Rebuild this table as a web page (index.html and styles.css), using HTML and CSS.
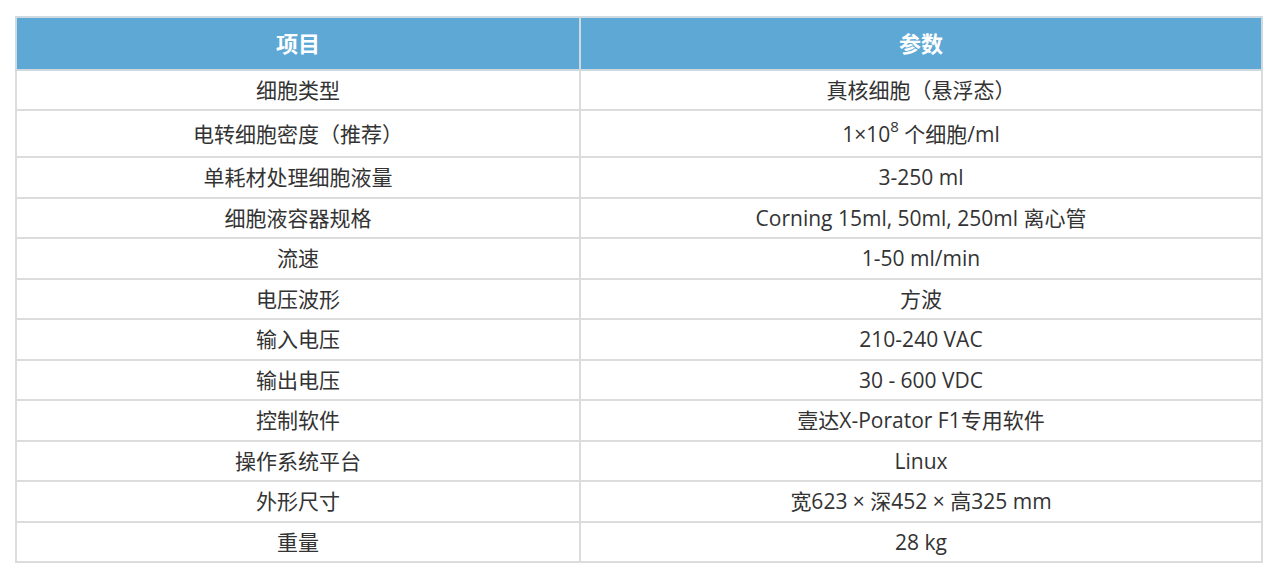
FILE: index.html
```html
<!DOCTYPE html>
<html lang="zh-CN">
<head>
<meta charset="utf-8">
<link rel="stylesheet" href="styles.css">
</head>
<body>
<table class="spec">
  <colgroup><col class="c1"><col class="c2"></colgroup>
  <thead>
    <tr><th>项目</th><th>参数</th></tr>
  </thead>
  <tbody>
    <tr><td>细胞类型</td><td>真核细胞（悬浮态）</td></tr>
    <tr class="tall"><td>电转细胞密度（推荐）</td><td>1×10<sup>8</sup> 个细胞/ml</td></tr>
    <tr><td>单耗材处理细胞液量</td><td>3-250 ml</td></tr>
    <tr><td>细胞液容器规格</td><td>Corning 15ml, 50ml, 250ml 离心管</td></tr>
    <tr><td>流速</td><td>1-50 ml/min</td></tr>
    <tr><td>电压波形</td><td>方波</td></tr>
    <tr><td>输入电压</td><td>210-240 VAC</td></tr>
    <tr><td>输出电压</td><td>30 - 600 VDC</td></tr>
    <tr><td>控制软件</td><td>壹达X-Porator F1专用软件</td></tr>
    <tr><td>操作系统平台</td><td>Linux</td></tr>
    <tr><td>外形尺寸</td><td>宽623 × 深452 × 高325 mm</td></tr>
    <tr><td>重量</td><td>28 kg</td></tr>
  </tbody>
</table>
</body>
</html>
```
FILE: styles.css
```css
html, body {
  margin: 0;
  padding: 0;
  background: #ffffff;
}
body {
  padding: 16px 0 0 15px;
  font-family: "Open Sans", "Noto Sans CJK SC", sans-serif;
  color: #333333;
}
.spec {
  border-collapse: collapse;
  width: 1248px;
  table-layout: fixed;
  border: 2px solid #d9d9d9;
}
.spec .c1 { width: 564px; }
.spec th,
.spec td {
  border: 2px solid #dcdcdc;
  text-align: center;
  vertical-align: middle;
  padding: 0;
  font-size: 21px;
  line-height: 26px;
}
.spec th {
  background: #5ea8d6;
  color: #ffffff;
  font-weight: 700;
  font-size: 22px;
  height: 50.5px;
  border-color: #cfd9e0;
}
.spec td {
  height: 38.5px;
}
.spec .tall td {
  height: 45px;
}
.spec sup {
  font-size: 15px;
  line-height: 0;
  vertical-align: 10px;
}
```
